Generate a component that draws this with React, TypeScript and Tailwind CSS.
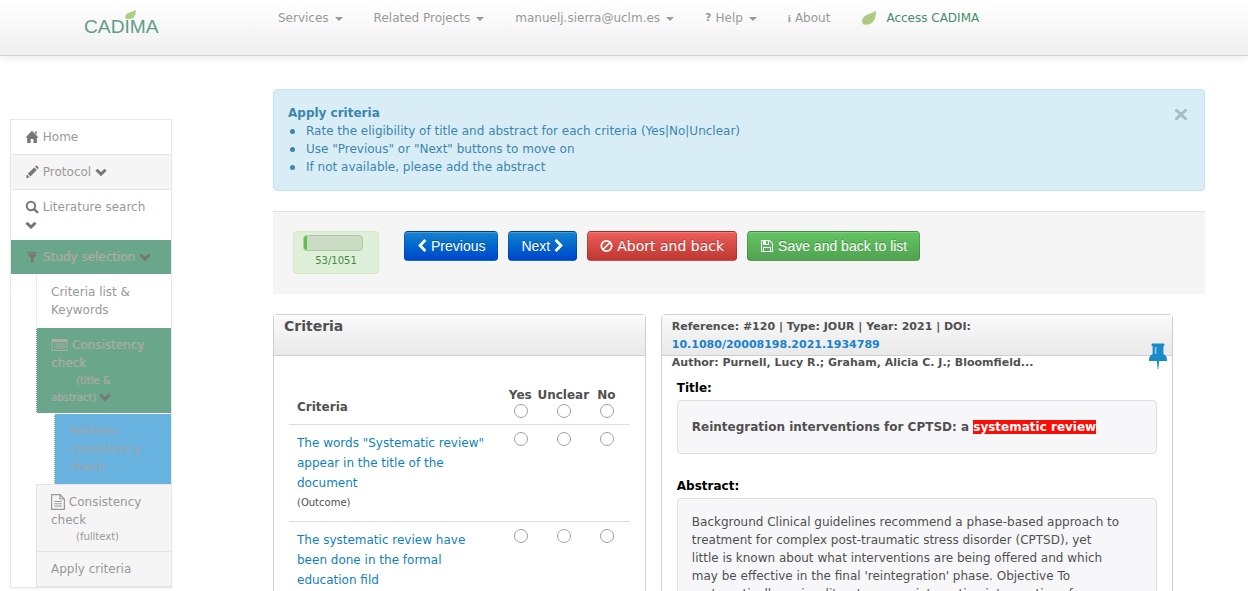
import type { ReactNode } from 'react'
import clsx from 'clsx'

type IconProps = { className?: string }

function Glyph({ className, children, box = '0 0 14 14' }: IconProps & { children: ReactNode; box?: string }) {
  return (
    <svg viewBox={box} fill="currentColor" aria-hidden="true" className={clsx('inline-block shrink-0', className)}>
      {children}
    </svg>
  )
}

const HomeIcon = () => (
  <Glyph className="size-[14px] align-[-3px]">
    <path d="M7 .8 13.6 7.6H11.9V13H8.5V9H5.7V13H2.2V7.6H.5L7 .8ZM10 1.6h1.7v3.2L10 3Z" />
  </Glyph>
)

const PencilIcon = () => (
  <Glyph className="size-[14px] align-[-3px]">
    <path d="M1 13.2 2 9.6 4.6 12.2ZM2.8 8.8 9.2 2.4 11.8 5 5.4 11.4ZM10 1.6 11 .7Q11.5.3 12 .8L13.4 2.2Q13.9 2.7 13.4 3.2L12.5 4.2Z" />
  </Glyph>
)

const SearchIcon = () => (
  <Glyph className="size-[14px] align-[-3px]">
    <circle cx="6" cy="6" r="4.2" fill="none" stroke="currentColor" strokeWidth="2" />
    <path d="M9 9 12.2 12.2" stroke="currentColor" strokeWidth="2.4" strokeLinecap="round" />
  </Glyph>
)

const FilterIcon = () => (
  <Glyph className="size-[14px] align-[-3px]">
    <path d="M2.6 2h9v1.2h-9ZM2.6 4h9L8.4 8.4V12L6 13V8.4Z" />
  </Glyph>
)

const ChevronDown = () => (
  <Glyph className="size-[12px] align-[-2px] text-[#777777]" box="0 0 12 12">
    <path d="M.4 4.8 2.5 2.7 6 6.1 9.5 2.7 11.6 4.8 6 10.3Z" />
  </Glyph>
)

const ListAltIcon = () => (
  <Glyph className="h-[14px] w-[17px] align-[-3px]" box="0 0 17 14">
    <path fillRule="evenodd" d="M1.5 1H15.5Q16.5 1 16.5 2V12Q16.5 13 15.5 13H1.5Q.5 13 .5 12V2Q.5 1 1.5 1ZM1.5 4V12H15.5V4Z" />
    <path d="M3 5.5h1.2v1H3ZM5.3 5.5H14v1H5.3ZM3 7.5h1.2v1H3ZM5.3 7.5H14v1H5.3ZM3 9.5h1.2v1H3ZM5.3 9.5H14v1H5.3Z" />
  </Glyph>
)

const FileIcon = () => (
  <Glyph className="h-[16px] w-[14px] align-[-4px]" box="0 0 14 16">
    <path d="M.6.6H9L13.4 5V15.4H.6ZM9 .6V5H13.4" fill="none" stroke="currentColor" strokeWidth="1.2" />
    <path d="M3.3 7.5h7.5M3.3 9.8h7.5M3.3 12.1h7.5" stroke="currentColor" />
  </Glyph>
)

const ChevronLeft = () => (
  <Glyph className="h-[14px] w-[10px]" box="256 0 1280 1792">
    <path d="M1427 301l-531 531 531 531q19 19 19 45t-19 45l-166 166q-19 19-45 19t-45-19l-742-742q-19-19-19-45t19-45l742-742q19-19 45-19t45 19l166 166q19 19 19 45t-19 45z" />
  </Glyph>
)

const ChevronRight = () => (
  <Glyph className="h-[14px] w-[10px]" box="256 0 1280 1792">
    <path d="M1363 877l-742 742q-19 19-45 19t-45-19l-166-166q-19-19-19-45t19-45l531-531-531-531q-19-19-19-45t19-45l166-166q19-19 45-19t45 19l742 742q19 19 19 45t-19 45z" />
  </Glyph>
)

const BanIcon = () => (
  <Glyph className="h-[14px] w-[13px]" box="0.5 0 13 14">
    <path d="M3 11 11 3" stroke="currentColor" strokeWidth="1.7" />
    <circle cx="7" cy="7" r="5.2" fill="none" stroke="currentColor" strokeWidth="1.7" />
  </Glyph>
)

const SaveIcon = () => (
  <Glyph className="size-[14px]" box="0 0 1792 1792">
    <path d="M512 1536h768v-384h-768v384zm896 0h128v-896q0-14-10-38.5t-20-34.5l-281-281q-10-10-34-20t-39-10v416q0 40-28 68t-68 28h-576q-40 0-68-28t-28-68v-416h-128v1280h128v-416q0-40 28-68t68-28h832q40 0 68 28t28 68v416zm-384-928v-320q0-13-9.5-22.5t-22.5-9.5h-192q-13 0-22.5 9.5t-9.5 22.5v320q0 13 9.5 22.5t22.5 9.5h192q13 0 22.5-9.5t9.5-22.5zm640 32v928q0 40-28 68t-68 28h-1344q-40 0-68-28t-28-68v-1344q0-40 28-68t68-28h928q40 0 88 20t76 48l280 280q28 28 48 76t20 88z" />
  </Glyph>
)

const PinIcon = () => (
  <svg viewBox="0 0 18 26" className="h-[26px] w-[18px]" aria-hidden="true">
    <path
      fill="#1b8acb"
      d="M3.4.5H14.6Q15.5.5 15.5 1.7 15.5 3 14.4 3.2V11Q18 12.6 18 16.5V18H10.2L9.3 26H8.7L7.8 18H0V16.5Q0 12.6 3.6 11V3.2Q2.5 3 2.5 1.7 2.5.5 3.4.5Z"
    />
    <path fill="#8fc8ee" d="M5.8 4h1.6v7H5.8Z" />
  </svg>
)

const Leaf = ({ className }: IconProps) => (
  <svg viewBox="0 0 16 16" className={className} aria-hidden="true">
    <path fill="#b0cb83" d="M14.8.8Q15.6 5.5 13.6 9.5 10.5 15.2 4.5 14.8 1 14.4 1 11 1.2 6.5 6.5 4.5 11.5 3.2 14.8.8Z" />
    <path fill="none" stroke="#9dbb6d" strokeWidth=".6" d="M2.5 14Q7 9.5 12 5" />
  </svg>
)

const NAV: { label: string; mark?: string; caret?: boolean }[] = [
  { label: 'Services', caret: true },
  { label: 'Related Projects', caret: true },
  { label: 'manuelj.sierra@uclm.es', caret: true },
  { label: 'Help', mark: '?', caret: true },
  { label: 'About', mark: 'i' },
]

function Header() {
  return (
    <header className="flex h-14 shrink-0 items-start border-b border-[#d0d0d0] bg-linear-to-b from-white to-[#f0f0f0] pl-[84px] shadow-[0_1px_10px_rgba(0,0,0,0.1)]">
      <a href="#" aria-label="CADIMA" className="mt-[9px] w-[76px]">
        <svg viewBox="0 0 76 28" className="h-7 w-[76px]">
          <text x="0" y="24" fontFamily="Liberation Sans, sans-serif" fontSize="19.2" fill="#5f9d88">
            CADIMA
          </text>
          <path fill="#b0cb83" d="M51.8.8Q52.4 9.8 44.5 10.3 41 10.3 41.2 7.5 41.8 4.5 45.5 3.4 49 2.8 51.8.8Z" />
        </svg>
      </a>
      <nav className="ml-[118px] flex gap-[31px] pt-[9px] leading-[18px] text-[#999999]">
        {NAV.map(({ label, mark, caret }) => (
          <a key={label} href="#" className="flex items-center whitespace-nowrap">
            {mark && (
              <b className={clsx('mr-1 text-[11px]', mark === 'i' && "font-['Liberation_Serif',serif]")}>{mark}</b>
            )}
            {label}
            {caret && <span className="mt-0.5 ml-1.5 border-x-4 border-t-4 border-x-transparent border-t-[#999999]" />}
          </a>
        ))}
        <a href="#" className="flex items-center whitespace-nowrap text-[#468c6f]">
          <Leaf className="mr-[9px] size-4" />
          Access CADIMA
        </a>
      </nav>
    </header>
  )
}

// selected entries keep a faint doubled look over the coloured background
const SELECTED_GREEN = 'bg-[#6aa68b] text-[#aaaea6] [text-shadow:1px_0_0_rgba(160,165,155,0.6)]'
const SELECTED_BLUE = 'bg-[#67b2de] text-[#95a9b6] [text-shadow:1px_0_0_rgba(145,165,180,0.6)]'

function Sidebar() {
  return (
    <aside className="w-[162px] shrink-0 pt-[63px]">
      <nav className="border border-[#e8e8e8] text-[#999999] shadow-[0_1px_3px_rgba(0,0,0,0.05)]">
        <a href="#" className="block border-b border-[#e5e5e5] px-3.5 py-2">
          <span className="text-[#777777]"><HomeIcon /></span> Home
        </a>
        <a href="#" className="block border-b border-[#e5e5e5] bg-[#f5f5f5] px-3.5 py-2">
          <span className="text-[#777777]"><PencilIcon /></span> Protocol <ChevronDown />
        </a>
        <a href="#" className="block px-3.5 pt-2 pb-1.5">
          <span className="text-[#777777]"><SearchIcon /></span> Literature search <ChevronDown />
        </a>
        <a href="#" className={clsx('block border-b border-white px-3.5 py-2 whitespace-nowrap', SELECTED_GREEN)}>
          <span className="text-[#777777]"><FilterIcon /></span> Study selection <ChevronDown />
        </a>
        <div className="pl-[25px]">
          <a href="#" className="block border-b border-l border-dotted border-b-white border-l-[#dddddd] px-3.5 py-2">
            Criteria list &amp; Keywords
          </a>
          <a href="#" className={clsx('block border-l border-dotted border-white px-3.5 pt-2 pb-[7px]', SELECTED_GREEN)}>
            <ListAltIcon /> Consistency check
            <span className="block text-[10px] leading-[17px]">
              <span className="pl-[25px]">(title &amp;</span>
              <br />
              abstract) <ChevronDown />
            </span>
          </a>
          <div className="border-t border-white pl-[18px]">
            <a href="#" className={clsx('block border-l border-dotted border-white px-3.5 py-2', SELECTED_BLUE)}>
              Perform consistency check
            </a>
          </div>
          <a href="#" className="block border border-r-0 border-[#e5e5e5] bg-[#f5f5f5] px-3.5 pt-2 pb-[7px]">
            <FileIcon /> Consistency check
            <small className="block pl-[25px] text-[10px] leading-[15px]">(fulltext)</small>
          </a>
          <a href="#" className="block border-b border-l border-[#e5e5e5] bg-[#f5f5f5] px-3.5 py-2">
            Apply criteria
          </a>
        </div>
      </nav>
    </aside>
  )
}

const BTN = 'flex h-[30px] items-center gap-1 rounded border border-black/15 px-3 text-sm whitespace-nowrap text-white shadow-[inset_0_1px_0_rgba(255,255,255,0.2)] [text-shadow:0_-1px_0_rgba(0,0,0,0.25)]'

function Toolbar() {
  return (
    <div className="mt-5 flex items-start border-t border-[#e0e0e0] bg-[#f5f5f5] px-5 pt-[19px]">
      <div className="flex w-[86px] flex-col items-center rounded border border-[#d6e9c6] bg-[#dff0d8] pt-[3px] pb-0.5">
        <div className="mr-1.5 h-4 w-[60px] overflow-hidden rounded-sm border border-[#b4c4b0] bg-[#cbdcc5]">
          <div className="h-full bg-[#5dc049]" style={{ width: `${(53 / 1051) * 100}%` }} />
        </div>
        <span className="text-[10px] leading-5 text-[#468847]">53/1051</span>
      </div>
      <div className="ml-[25px] flex gap-2.5 pb-[33px] font-['Liberation_Sans',Arial,sans-serif]">
        <button type="button" className={clsx(BTN, 'bg-linear-to-b from-[#1a83cc] to-[#0044cc]')}>
          <ChevronLeft /> Previous
        </button>
        <button type="button" className={clsx(BTN, 'bg-linear-to-b from-[#1a83cc] to-[#0044cc]')}>
          Next <ChevronRight />
        </button>
        <button type="button" className={clsx(BTN, "bg-linear-to-b from-[#ee5f5b] to-[#bd362f] font-['DejaVu_Sans',Verdana,sans-serif]")}>
          <BanIcon /> Abort and back
        </button>
        <button type="button" className={clsx(BTN, 'bg-linear-to-b from-[#62c462] to-[#51a351]')}>
          <SaveIcon /> Save and back to list
        </button>
      </div>
    </div>
  )
}

const ANSWERS = ['Yes', 'Unclear', 'No']

const CRITERIA = [
  { text: 'The words "Systematic review" appear in the title of the document', kind: '(Outcome)' },
  { text: 'The systematic review have been done in the formal education fild', kind: '(Outcome)' },
]

const RADIO = 'block size-[14px] appearance-none rounded-full border border-[#a0a0a0] bg-white checked:border-4 checked:border-[#0088cc]'

function CriteriaPanel() {
  return (
    <section className="w-[40%] rounded-t border border-[#d0d0d0]">
      <h2 className="h-[41px] border-b border-[#d0d0d0] bg-linear-to-b from-[#fafafa] to-[#e9e9e9] px-2.5 pt-0.5 text-sm leading-[18px] font-bold">
        Criteria
      </h2>
      <div className="px-[15px] pt-6">
        <table className="w-full table-fixed">
          <thead>
            <tr className="border-b border-[#dddddd]">
              <th className="px-2 pt-2.5 text-left">Criteria</th>
              {ANSWERS.map((answer) => (
                <th key={answer} className="w-[43px] py-1.5">
                  <label className="-ml-1 flex flex-col items-center">
                    {answer}
                    <input type="radio" name="all" className={clsx(RADIO, 'ml-0.5')} />
                  </label>
                </th>
              ))}
            </tr>
          </thead>
          <tbody>
            {CRITERIA.map(({ text, kind }) => (
              <tr key={text} className="border-b border-[#dddddd] align-top">
                <td className="p-2 leading-5">
                  <a href="#" className="block max-w-[190px] text-[#0f7fc4]">{text}</a>
                  <small className="block text-[10px] leading-5">{kind}</small>
                </td>
                {ANSWERS.map((answer) => (
                  <td key={answer} className="pt-[7px] pr-0.5">
                    <input type="radio" name={text} aria-label={answer} className={clsx(RADIO, 'mx-auto')} />
                  </td>
                ))}
              </tr>
            ))}
          </tbody>
        </table>
      </div>
    </section>
  )
}

function ReferencePanel() {
  return (
    <section className="relative w-[55%] rounded-t border border-[#d0d0d0]">
      <header className="h-[41px] border-b border-[#d0d0d0] bg-linear-to-b from-[#fafafa] to-[#e9e9e9] px-2.5 pt-[3px] text-[11px] leading-[18px] font-bold">
        Reference: #120 | Type: JOUR | Year: 2021 | DOI:
        <br />
        <a href="#" className="text-[#1a83cc]">10.1080/20008198.2021.1934789</a>
        <p>Author: Purnell, Lucy R.; Graham, Alicia C. J.; Bloomfield...</p>
      </header>
      <button type="button" aria-label="Pin" className="absolute top-7 right-[5px]">
        <PinIcon />
      </button>
      <div className="px-[15px] pt-[23px]">
        <h3 className="leading-[18px] font-bold text-black">Title:</h3>
        <div className="mt-[3px] rounded border border-[#dddfe2] bg-[#f7f7f9] px-3.5 py-[17px] font-bold">
          Reintegration interventions for CPTSD: a <mark className="bg-[#fb0d07] text-white">systematic review</mark>
        </div>
        <h3 className="mt-[23px] leading-[18px] font-bold text-black">Abstract:</h3>
        <p className="mt-[3px] rounded border border-[#dddfe2] bg-[#f7f7f9] px-3.5 py-3.5">
          Background Clinical guidelines recommend a phase-based approach to
          <br />
          treatment for complex post-traumatic stress disorder (CPTSD), yet
          <br />
          little is known about what interventions are being offered and which
          <br />
          may be effective in the final 'reintegration' phase. Objective To
          <br />
          systematically review literature on reintegration interventions for
        </p>
      </div>
    </section>
  )
}

const HINTS = [
  'Rate the eligibility of title and abstract for each criteria (Yes|No|Unclear)',
  'Use "Previous" or "Next" buttons to move on',
  'If not available, please add the abstract',
]

export default function App() {
  return (
    <div className="flex h-screen flex-col overflow-hidden bg-white font-['DejaVu_Sans',Verdana,sans-serif] text-xs leading-[18px] text-[#505050]">
      <Header />
      <div className="flex items-start gap-[101px] pr-[43px] pl-2.5">
        <Sidebar />
        <main className="min-w-0 flex-1 pt-[33px]">
          <div role="alert" className="flex items-start justify-between rounded border border-[#bce8f1] bg-[#d9edf7] p-3.5 text-[#3a87ad]">
            <div>
              <strong>Apply criteria</strong>
              <ul className="pl-0.5">
                {HINTS.map((hint) => (
                  <li key={hint} className="flex items-center gap-[11px] before:size-[5px] before:shrink-0 before:rounded-full before:bg-current before:content-['']">
                    {hint}
                  </li>
                ))}
              </ul>
            </div>
            <button type="button" aria-label="Close" className="mr-0.5 text-[#a6bcc7]">
              <Glyph className="block size-[14px]">
                <path d="M1.5 2.500 12.500 12.500M12.500 2.500 1.500 12.500" stroke="currentColor" strokeWidth="3" />
              </Glyph>
            </button>
          </div>
          <Toolbar />
          <div className="mt-5 flex items-start gap-[15px]">
            <CriteriaPanel />
            <ReferencePanel />
          </div>
        </main>
      </div>
    </div>
  )
}
